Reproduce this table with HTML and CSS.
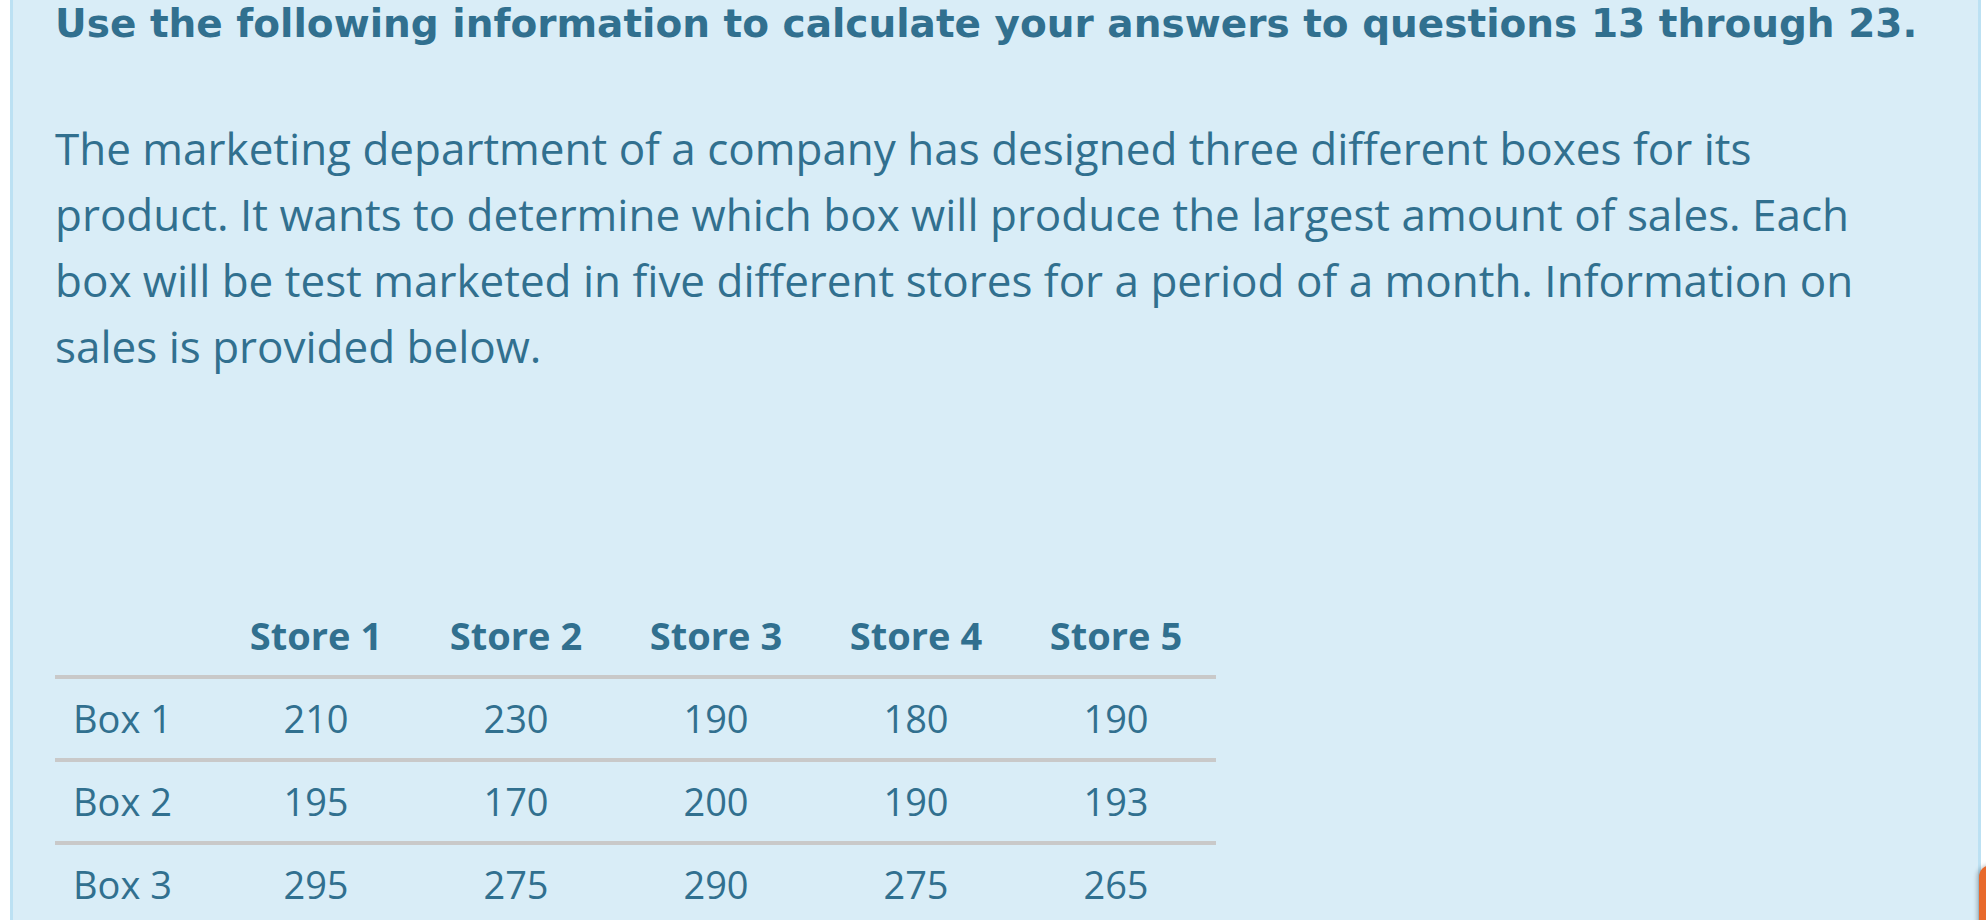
FILE: index.html
```html
<!DOCTYPE html>
<html lang="en">
<head>
<meta charset="utf-8">
<title>Questions 13 through 23</title>
<link rel="stylesheet" href="styles.css">
</head>
<body>
<div class="alert">
  <h2 class="lead">Use the following information to calculate your answers to questions 13 through 23.</h2>
  <p class="intro">The marketing department of a company has designed three different boxes for its product. It wants to determine which box will produce the largest amount of sales. Each box will be test marketed in five different stores for a period of a month. Information on sales is provided below.</p>
  <table class="sales">
    <colgroup>
      <col class="c-label">
      <col class="c-num"><col class="c-num"><col class="c-num"><col class="c-num"><col class="c-num">
    </colgroup>
    <thead>
      <tr><th></th><th>Store 1</th><th>Store 2</th><th>Store 3</th><th>Store 4</th><th>Store 5</th></tr>
    </thead>
    <tbody>
      <tr><td>Box 1</td><td>210</td><td>230</td><td>190</td><td>180</td><td>190</td></tr>
      <tr><td>Box 2</td><td>195</td><td>170</td><td>200</td><td>190</td><td>193</td></tr>
      <tr><td>Box 3</td><td>295</td><td>275</td><td>290</td><td>275</td><td>265</td></tr>
    </tbody>
  </table>
</div>
<div class="feedback-tab"></div>
</body>
</html>
```
FILE: styles.css
```css
html, body {
  margin: 0;
  padding: 0;
  background: #ffffff;
  overflow: hidden;
}

.alert {
  margin: 0 5px 0 10px;
  height: 920px;
  box-sizing: border-box;
  padding: 0 42px 0 42px;
  background: #d9edf7;
  border-left: 3px solid #bce1f3;
  border-right: 3px solid #bce1f3;
  color: #31708f;
  font-family: "Open Sans", "Liberation Sans", sans-serif;
}

.lead {
  margin: 0;
  padding-top: 1px;
  font-family: "DejaVu Sans", Verdana, sans-serif;
  font-weight: bold;
  font-size: 39px;
  line-height: 46px;
  white-space: nowrap;
}

.intro {
  margin: 68px 0 0 0;
  max-width: 1870px;
  font-size: 44px;
  line-height: 66px;
}

.sales {
  margin-top: 217px;
  border-collapse: collapse;
  table-layout: fixed;
  width: 1161px;
  font-size: 38px;
}

.c-label { width: 161px; }
.c-num { width: 200px; }

.sales th,
.sales td {
  padding: 15px 18px;
  line-height: 49px;
  text-align: center;
  white-space: nowrap;
}

.sales th {
  font-weight: bold;
  border-bottom: 4px solid #c9c9c9;
}

.sales td:first-child {
  text-align: left;
}

.sales tbody tr + tr td {
  border-top: 4px solid #c9c9c9;
}

.feedback-tab {
  position: fixed;
  left: 1979px;
  top: 865px;
  width: 40px;
  height: 120px;
  background: #e8692b;
  border-radius: 12px 0 0 0;
  box-shadow: -2px 0 4px rgba(0, 0, 0, 0.25);
}
```
